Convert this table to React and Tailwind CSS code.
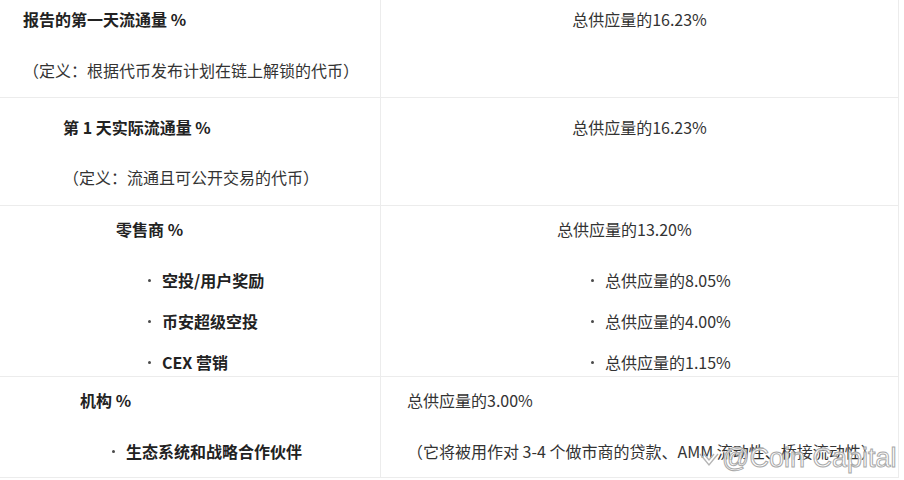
import React from "react";

const Dot = () => <span className="inline-block w-[3px] h-[3px] rounded-full bg-[#4a4a4a] mr-[11px] shrink-0" />;

export default function App() {
  const font = { fontFamily: '"Noto Sans CJK SC", "Noto Sans", sans-serif' };
  return (
    <div className="relative w-[904px] h-[480px] bg-white overflow-hidden text-[16px] leading-[24px] text-[#333]" style={font}>
      <div className="w-[899px] grid grid-cols-[380px_519px]">
        {/* Row 1 */}
        <div className="h-[98px] border-b border-[#ececec] pl-[23px] pt-[7px]">
          <div className="font-bold text-[#222]">报告的第一天流通量 %</div>
          <div className="mt-[27px]">（定义：根据代币发布计划在链上解锁的代币）</div>
        </div>
        <div className="h-[98px] border-b border-l border-r border-[#ececec] pt-[7px] text-center">
          总供应量的16.23%
        </div>
        {/* Row 2 */}
        <div className="h-[108px] border-b border-[#ececec] pl-[63px] pt-[17px]">
          <div className="font-bold text-[#222]">第 1 天实际流通量 %</div>
          <div className="mt-[26px]">（定义：流通且可公开交易的代币）</div>
        </div>
        <div className="h-[108px] border-b border-l border-r border-[#ececec] pt-[17px] text-center">
          总供应量的16.23%
        </div>
        {/* Row 3 */}
        <div className="h-[171px] border-b border-[#ececec] pt-[11px] font-bold text-[#222]">
          <div className="pl-[116px]">零售商 %</div>
          <div className="pl-[148px] mt-[27px] flex flex-col gap-[17px]">
            <div className="flex items-center"><Dot />空投/用户奖励</div>
            <div className="flex items-center"><Dot />币安超级空投</div>
            <div className="flex items-center"><Dot />CEX 营销</div>
          </div>
        </div>
        <div className="h-[171px] border-b border-l border-r border-[#ececec] pt-[11px]">
          <div className="pl-[176px]">总供应量的13.20%</div>
          <div className="pl-[210px] mt-[27px] flex flex-col gap-[17px]">
            <div className="flex items-center"><Dot />总供应量的8.05%</div>
            <div className="flex items-center"><Dot />总供应量的4.00%</div>
            <div className="flex items-center"><Dot />总供应量的1.15%</div>
          </div>
        </div>
        {/* Row 4 */}
        <div className="h-[101px] border-b border-[#ececec] pt-[11px] font-bold text-[#222]">
          <div className="pl-[80px]">机构 %</div>
          <div className="pl-[112px] mt-[27px] flex items-center"><Dot />生态系统和战略合作伙伴</div>
        </div>
        <div className="h-[101px] border-b border-l border-r border-[#ececec] pt-[11px] pl-[26px]">
          <div>总供应量的3.00%</div>
          <div className="mt-[27px] whitespace-nowrap">（它将被用作对 3-4 个做市商的贷款、AMM 流动性、桥接流动性）</div>
        </div>
      </div>
      {/* watermark */}
      <div className="absolute left-[698px] top-[443px] flex items-center gap-[2px] pointer-events-none">
        <svg width="22" height="20" viewBox="0 0 22 20" fill="none" stroke="#b5b5b5" strokeWidth="1.4">
          <path d="M2 6 L11 17 L20 6" />
          <path d="M6 6 L11 12 L16 6" />
        </svg>
        <span
          className="text-[27px] leading-[30px] text-white/80 [-webkit-text-stroke:1px_#a8a8a8] whitespace-nowrap"
          style={{ fontFamily: '"Liberation Sans", Arial, sans-serif' }}
        >
          @Coin Capital
        </span>
      </div>
    </div>
  );
}
